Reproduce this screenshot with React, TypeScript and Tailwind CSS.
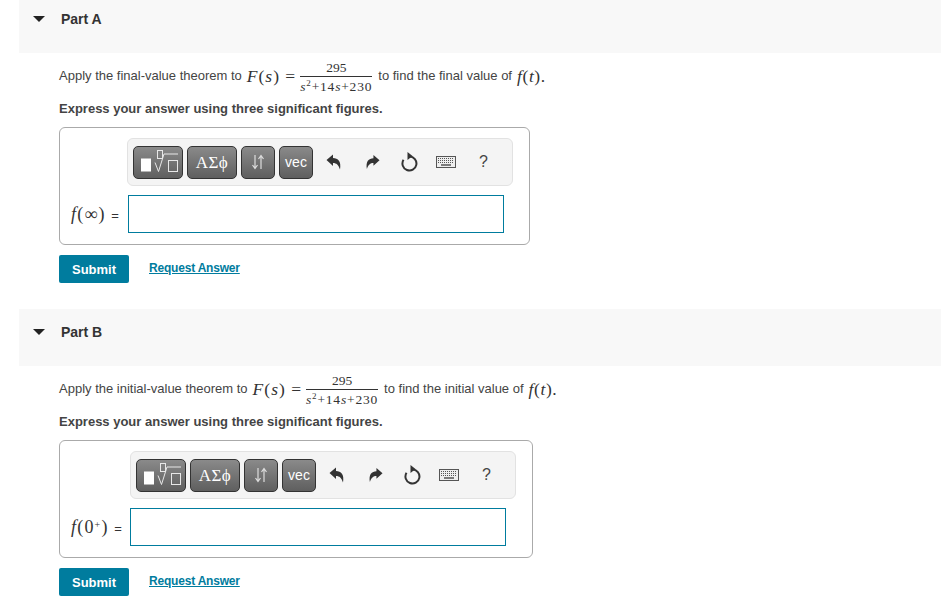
const sans = "font-['Liberation_Sans',Arial,sans-serif]";
const serif = "font-['Liberation_Serif','Times_New_Roman',serif]";

function Caret() {
  return (
    <svg width="12" height="6" viewBox="0 0 12 6" className="block">
      <path d="M0 0H12L6 6Z" fill="#222" />
    </svg>
  );
}

function ToolButton({ w, children }: { w: string; children: React.ReactNode }) {
  return (
    <div className={`${w} h-[33px] flex items-center justify-center rounded-[5px] border border-[#333] bg-gradient-to-b from-[#8a8a8a] to-[#5f5f5f] text-white`}>
      {children}
    </div>
  );
}

function Toolbar({ ml }: { ml: string }) {
  return (
    <div className={`${ml} w-[386px] h-[48px] flex items-center pl-[5px] rounded-[6px] border border-[#e2e2e2] bg-[#f4f4f4]`}>
      <div className="flex gap-[4px]">
        <ToolButton w="w-[50px]">
          <svg width="44" height="28" viewBox="0 0 44 28">
            <rect x="5" y="10.500" width="10" height="13" fill="#fff" />
            <rect x="21.500" y="2.500" width="5" height="8" fill="none" stroke="#e8e8e8" strokeWidth="1" />
            <path d="M19 14.500l3.500 9 5.500-17.500h14" fill="none" stroke="#e8e8e8" strokeWidth="1" />
            <rect x="32.500" y="12.500" width="9" height="11" fill="none" stroke="#e8e8e8" strokeWidth="1" />
          </svg>
        </ToolButton>
        <ToolButton w="w-[50px]">
          <span className={`${serif} text-[17px] leading-none tracking-[0.5px]`}>ΑΣϕ</span>
        </ToolButton>
        <ToolButton w="w-[34px]">
          <svg width="16" height="16" viewBox="0 0 16 16">
            <path d="M5 1v13M2.500 11 5 14.500 7.500 11M11 15V2M8.500 5 11 1.500 13.500 5" fill="none" stroke="#ddd" strokeWidth="1.200" />
          </svg>
        </ToolButton>
        <ToolButton w="w-[34px]">
          <span className={`${sans} text-[14px] leading-none`}>vec</span>
        </ToolButton>
      </div>
      <div className="flex items-center ml-[13px]">
        <svg width="16" height="16" viewBox="0 0 16 16" className="mr-[23px]">
          <path d="M0.500 6 7 0.500V4C12 4 15.500 7.500 14 15.500 12.500 11 10.500 9 7 9V12Z" fill="#333" />
        </svg>
        <svg width="15" height="16" viewBox="0 0 16 16" className="mr-[20px]">
          <path d="M15.500 6 9 0.500V4C4 4 0.500 7.500 2 15.500 3.500 11 5.500 9 9 9V12Z" fill="#333" />
        </svg>
        <svg width="18" height="20" viewBox="0 0 18 20" className="mr-[18px]">
          <path d="M9.500 4.500a7 7 0 1 1-6 3.300" fill="none" stroke="#333" strokeWidth="2" />
          <path d="M7.500 0 12.500 4 7.500 8Z" fill="#333" />
        </svg>
        <svg width="20" height="12" viewBox="0 0 20 12" className="mr-[23px]">
          <rect x="0.500" y="0.500" width="19" height="11" fill="#eee" stroke="#555" />
          <path d="M2 2.500h16M2 4.500h16M2 6.500h16" stroke="#555" strokeWidth="1" strokeDasharray="1 1" />
          <path d="M5 9h10" stroke="#555" strokeWidth="1.500" />
        </svg>
        <span className={`${sans} text-[16px] leading-none text-[#444]`}>?</span>
      </div>
    </div>
  );
}

function Fraction() {
  return (
    <span className={`${serif} inline-flex flex-col items-center text-[13.500px] leading-none text-[#333] ml-[4px] mr-[6px] mt-[2px]`}>
      <span className="pb-[1px]">295</span>
      <span className="border-t border-[#333] pt-[3px] tracking-[0.8px] whitespace-nowrap">
        <i>s</i><sup className="text-[9px] leading-none">2</sup>+14<i>s</i>+230
      </span>
    </span>
  );
}

function Part(props: {
  title: string;
  head: string;
  pt: string;
  lead: string;
  tail: string;
  boxW: string;
  toolMl: string;
  label: React.ReactNode;
  labelW: string;
  top: string;
}) {
  return (
    <section className={props.top}>
      <div className={`ml-[19px] ${props.head} ${props.pt} bg-[#f8f8f8] flex items-start pl-[14px]`}>
        <Caret />
        <h2 className={`${sans} ml-[16px] -mt-[6px] text-[14px] leading-[18px] font-bold text-[#333]`}>{props.title}</h2>
      </div>
      <div className="ml-[59px]">
        <p className={`${sans} mt-[5px] h-[36px] flex items-center text-[13px] text-[#444] whitespace-nowrap`}>
          <span>{props.lead}</span>
          <span className={`${serif} ml-[5px] text-[17.500px] text-[#333] tracking-[1px]`}><i>F</i>(<i>s</i>) =</span>
          <Fraction />
          <span>{props.tail}</span>
          <span className={`${serif} ml-[5px] text-[17.500px] text-[#333] tracking-[0.6px]`}><i>f</i>(<i>t</i>).</span>
        </p>
        <p className={`${sans} mt-[5px] text-[13px] leading-[20px] font-bold text-[#444]`}>
          Express your answer using three significant figures.
        </p>
        <div className={`mt-[8px] ${props.boxW} h-[118px] rounded-[6px] border border-[#aaa] pt-[10px]`}>
          <Toolbar ml={props.toolMl} />
          <div className="flex items-center mt-[9px]">
            <div className={`${props.labelW} pl-[11px] ${serif} text-[18px] tracking-[1.2px] text-[#333] whitespace-nowrap`}>{props.label}</div>
            <div className="w-[376px] h-[38px] border border-[#007c9e] bg-white" />
          </div>
        </div>
        <div className="flex items-center mt-[10px]">
          <button className={`${sans} w-[70px] h-[28px] pt-[1px] rounded-[2px] bg-[#007c9e] text-white text-[13px] font-bold`}>Submit</button>
          <a className={`${sans} ml-[20px] -mt-[2px] text-[12px] font-bold text-[#007c9e] underline tracking-[-0.2px]`}>Request Answer</a>
        </div>
      </div>
    </section>
  );
}

export default function App() {
  return (
    <div className="w-[941px] h-[600px] overflow-hidden bg-white">
      <Part
        title="Part A"
        head="h-[53px]"
        pt="pt-[16px]"
        top=""
        lead="Apply the final-value theorem to"
        tail="to find the final value of"
        boxW="w-[471px]"
        toolMl="ml-[67px]"
        labelW="w-[68px]"
        label={<span><i>f</i>(∞) <span className={`${sans} text-[13px] tracking-normal`}>=</span></span>}
      />
      <Part
        title="Part B"
        head="h-[57px]"
        pt="pt-[20px]"
        top="mt-[26px]"
        lead="Apply the initial-value theorem to"
        tail="to find the initial value of"
        boxW="w-[474px]"
        toolMl="ml-[70px]"
        labelW="w-[70px]"
        label={<span><i>f</i>(0<sup className="text-[10px]">+</sup>) <span className={`${sans} text-[13px] tracking-normal`}>=</span></span>}
      />
    </div>
  );
}
